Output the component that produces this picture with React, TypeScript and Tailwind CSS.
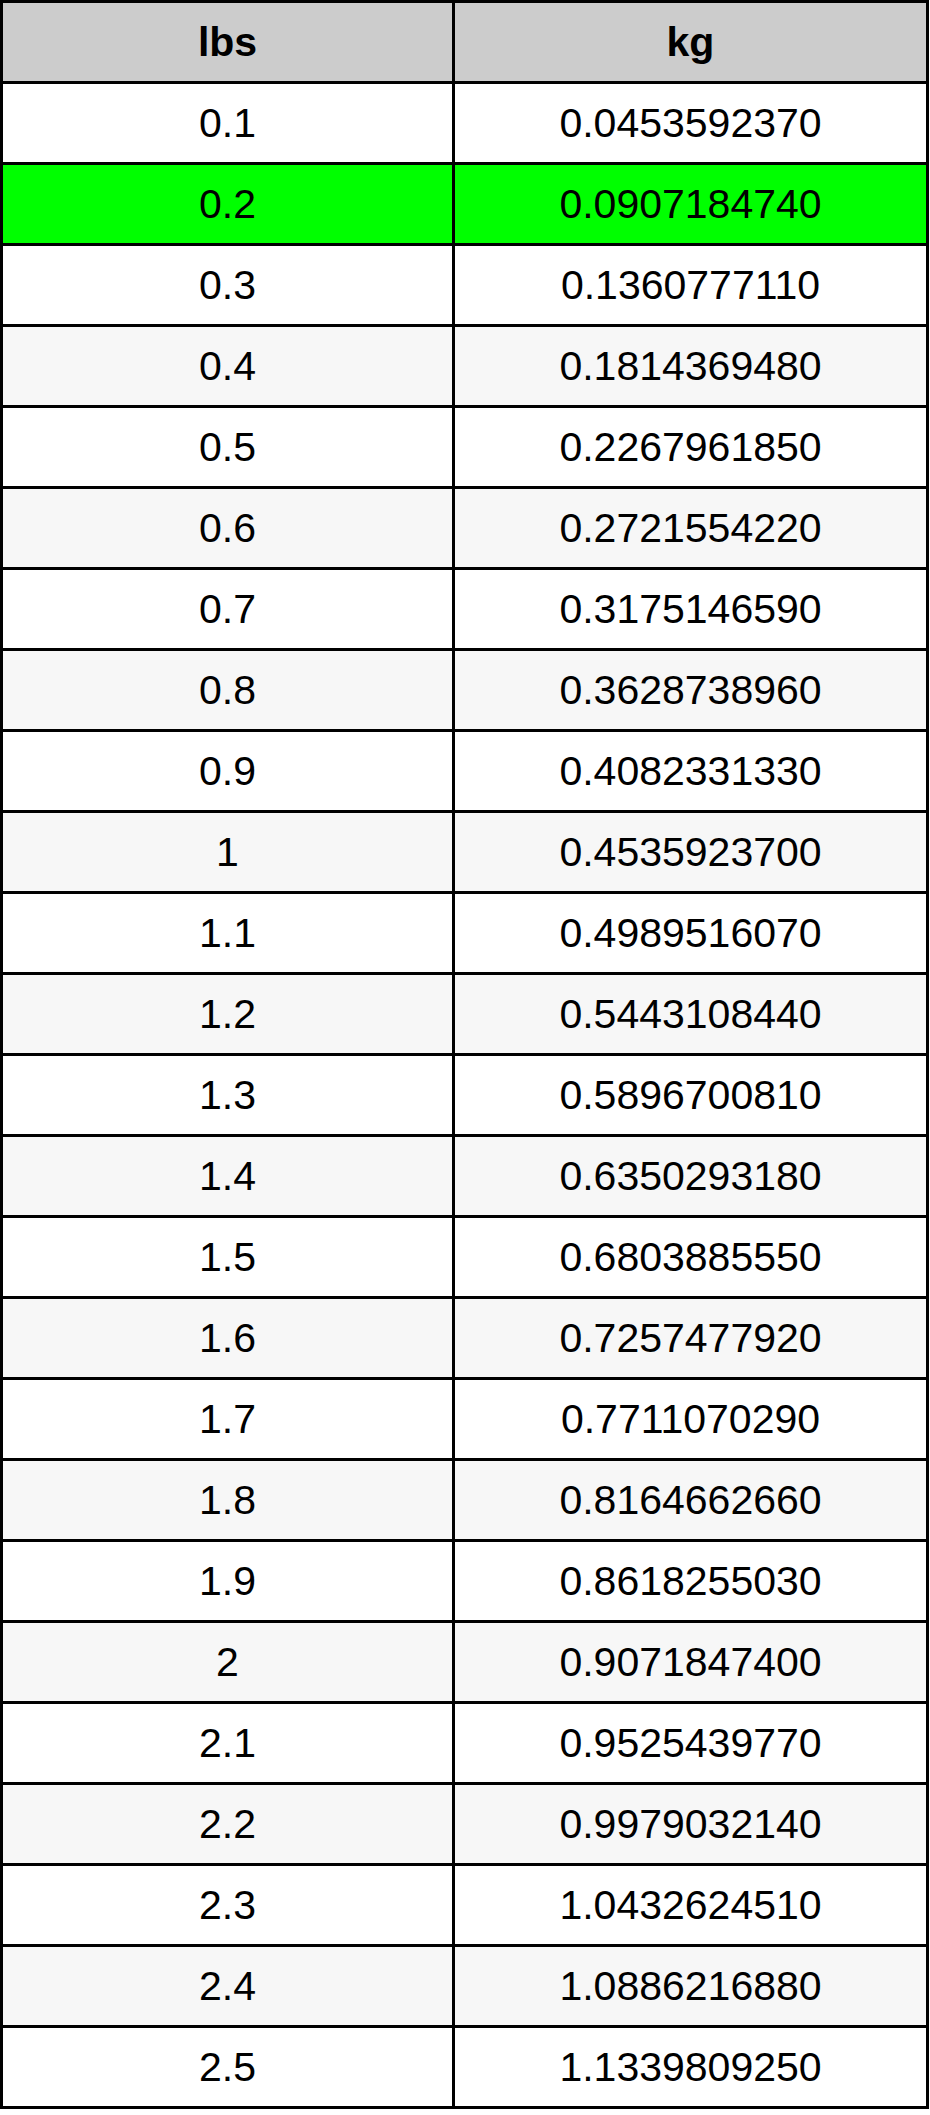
import React from 'react';

type Row = {
  lbs: string;
  kg: string;
};

const rows: Row[] = [
  { lbs: '0.1', kg: '0.0453592370' },
  { lbs: '0.2', kg: '0.0907184740' },
  { lbs: '0.3', kg: '0.1360777110' },
  { lbs: '0.4', kg: '0.1814369480' },
  { lbs: '0.5', kg: '0.2267961850' },
  { lbs: '0.6', kg: '0.2721554220' },
  { lbs: '0.7', kg: '0.3175146590' },
  { lbs: '0.8', kg: '0.3628738960' },
  { lbs: '0.9', kg: '0.4082331330' },
  { lbs: '1', kg: '0.4535923700' },
  { lbs: '1.1', kg: '0.4989516070' },
  { lbs: '1.2', kg: '0.5443108440' },
  { lbs: '1.3', kg: '0.5896700810' },
  { lbs: '1.4', kg: '0.6350293180' },
  { lbs: '1.5', kg: '0.6803885550' },
  { lbs: '1.6', kg: '0.7257477920' },
  { lbs: '1.7', kg: '0.7711070290' },
  { lbs: '1.8', kg: '0.8164662660' },
  { lbs: '1.9', kg: '0.8618255030' },
  { lbs: '2', kg: '0.9071847400' },
  { lbs: '2.1', kg: '0.9525439770' },
  { lbs: '2.2', kg: '0.9979032140' },
  { lbs: '2.3', kg: '1.0432624510' },
  { lbs: '2.4', kg: '1.0886216880' },
  { lbs: '2.5', kg: '1.1339809250' },
];

const HIGHLIGHT = '0.2';

const App: React.FC = () => {
  return (
    <div className="bg-white min-h-screen" style={{ fontFamily: '"Liberation Sans", Arial, sans-serif' }}>
      <div className="w-[929px] border-l-[3px] border-t-[3px] border-black text-[41px] leading-none text-black">
        <div className="flex h-[81px] bg-[#cccccc] font-bold">
          <div className="w-[452px] flex items-center justify-center border-r-[3px] border-b-[3px] border-black">lbs</div>
          <div className="w-[474px] flex items-center justify-center border-r-[3px] border-b-[3px] border-black">kg</div>
        </div>
        {rows.map((row, i) => {
          let bg = i % 2 === 0 ? 'bg-white' : 'bg-[#f7f7f7]';
          if (row.lbs === HIGHLIGHT) bg = 'bg-[#00ff00]';
          return (
            <div key={row.lbs} className={`flex h-[81px] ${bg}`}>
              <div className="w-[452px] flex items-center justify-center border-r-[3px] border-b-[3px] border-black">{row.lbs}</div>
              <div className="w-[474px] flex items-center justify-center border-r-[3px] border-b-[3px] border-black">{row.kg}</div>
            </div>
          );
        })}
      </div>
    </div>
  );
};

export default App;
